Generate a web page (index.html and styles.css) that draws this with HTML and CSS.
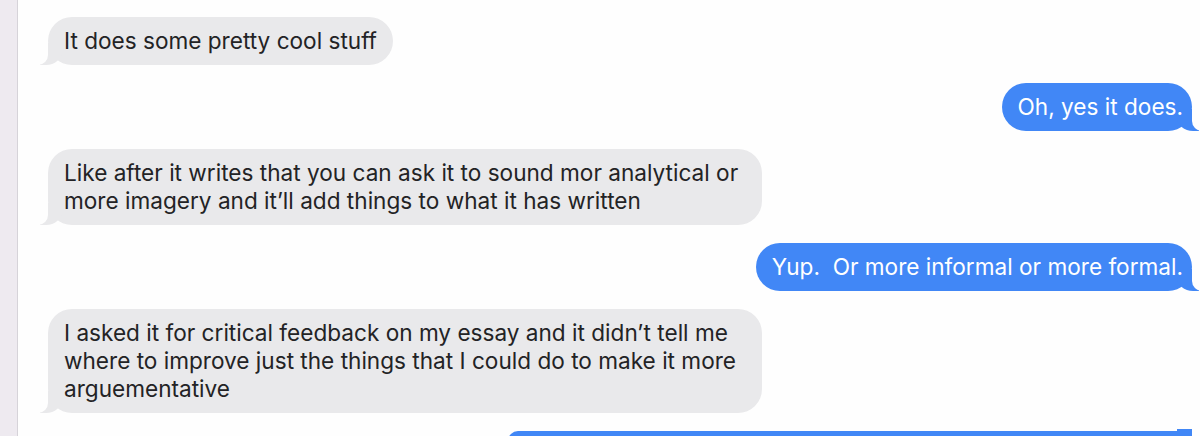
FILE: index.html
```html
<!DOCTYPE html>
<html lang="en">
<head>
<meta charset="utf-8">
<title>Messages</title>
<link rel="stylesheet" href="styles.css">
</head>
<body>
<div class="app">
  <div class="sidebar"></div>
  <main class="chat">
    <div class="bubble them">It does some pretty cool stuff</div>
    <div class="bubble me">Oh, yes it does.</div>
    <div class="bubble them full">Like after it writes that you can ask it to sound mor analytical or<br>more imagery and it’ll add things to what it has written</div>
    <div class="bubble me">Yup.&nbsp; Or more informal or more formal.</div>
    <div class="bubble them full">I asked it for critical feedback on my essay and it didn’t tell me<br>where to improve just the things that I could do to make it more<br>arguementative</div>
    <div class="bubble me cut"></div>
  </main>
</div>
</body>
</html>
```

FILE: styles.css
```css
html, body {
  margin: 0;
  padding: 0;
  height: 100%;
  overflow: hidden;
  background: #fefefe;
}

.app {
  display: flex;
  height: 100%;
}

.sidebar {
  width: 17px;
  flex: none;
  background: #eeeaf0;
  border-right: 1px solid #d6d3d9;
}

.chat {
  flex: 1;
  display: flex;
  flex-direction: column;
  gap: 18px;
  padding: 17px 8px 0 30px;
  font-family: "Inter", "Noto Sans", sans-serif;
  font-size: 22.6px;
  line-height: 28px;
}

.bubble {
  position: relative;
  z-index: 0;
  padding: 10px 16px;
  border-radius: 24px;
  white-space: nowrap;
}

.them {
  align-self: flex-start;
  background: #e9e9eb;
  color: #232325;
}

.full {
  width: 682px;
}

.me {
  align-self: flex-end;
  background: #4187f6;
  color: #ffffff;
  padding-right: 9px;
}

.them::before,
.them::after,
.me::before,
.me::after {
  content: "";
  position: absolute;
  z-index: -1;
  bottom: 0;
  height: 22px;
}

.them::before {
  left: -8px;
  width: 22px;
  background: #e9e9eb;
  border-bottom-right-radius: 16px 14px;
}

.them::after {
  left: -26px;
  width: 26px;
  background: #fefefe;
  border-bottom-right-radius: 10px;
}

.me::before {
  right: -7px;
  width: 22px;
  background: #4187f6;
  border-bottom-left-radius: 16px 14px;
}

.me::after {
  right: -26px;
  width: 26px;
  background: #fefefe;
  border-bottom-left-radius: 10px;
}

.cut {
  width: 659px;
  height: 60px;
}
```
